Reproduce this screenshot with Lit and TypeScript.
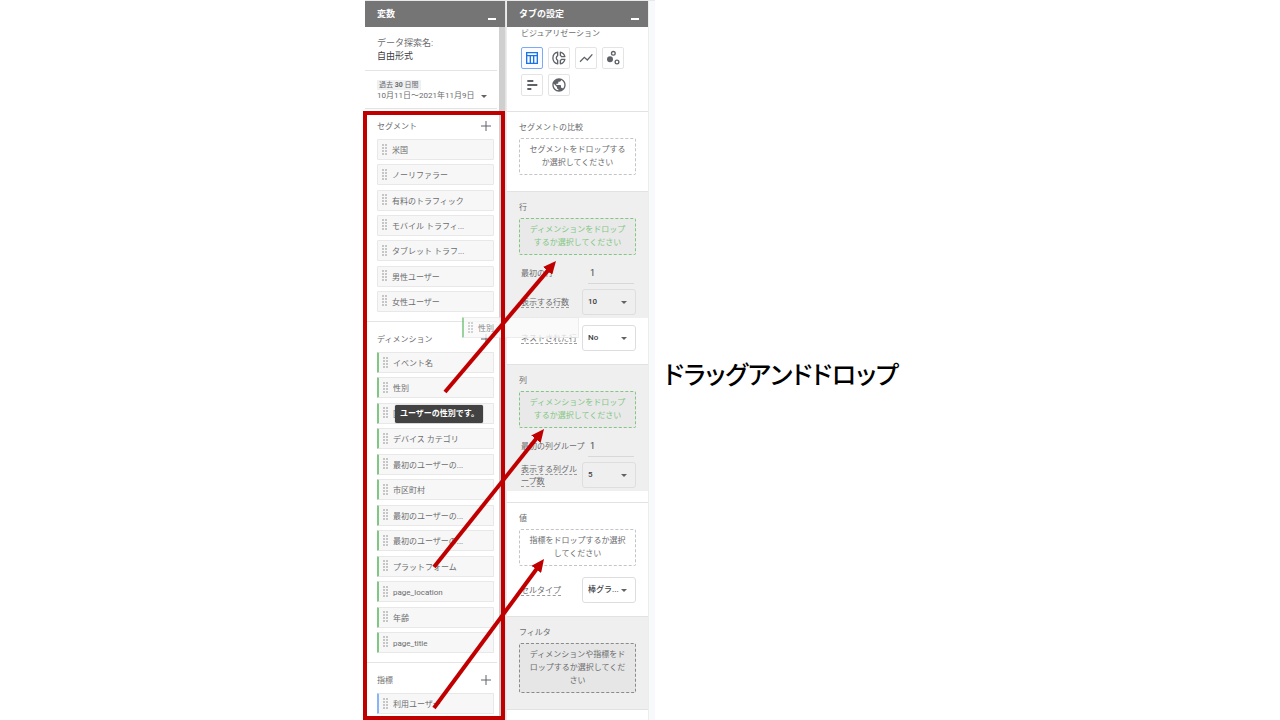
import { LitElement, html, svg, css, nothing } from "lit";
import { customElement } from "lit/decorators.js";

const segments = ["米国", "ノーリファラー", "有料のトラフィック", "モバイル トラフィ...", "タブレット トラフ...", "男性ユーザー", "女性ユーザー"];
const dimensions = ["イベント名", "性別", "国", "デバイス カテゴリ", "最初のユーザーの...", "市区町村", "最初のユーザーの...", "最初のユーザーの...", "プラットフォーム", "page_location", "年齢", "page_title"];
const metrics = ["利用ユーザー"];

const charts = [
  { name: "表", art: svg`<path d="M4 4h16v16H4zM4 8.500h16M9.500 8.500V20M14.500 8.500V20" fill="none" stroke="currentColor" stroke-width="2"/>` },
  { name: "ドーナツ グラフ", art: svg`<path d="M10 3.200a9 9 0 0 0 0 17.600v-5.300a4 4 0 0 1 0-7zM14 3.200a9 9 0 0 1 6.800 6.800h-5.100a4 4 0 0 0-1.700-1.700zM14 20.800a9 9 0 0 0 6.800-6.800h-5.100a4 4 0 0 1-1.700 1.700z" fill="none" stroke="currentColor" stroke-width="2" stroke-linejoin="round"/>` },
  { name: "折れ線グラフ", art: svg`<path d="M3 17.500l6.500-6.500 4.500 4 7.500-8.500" fill="none" stroke="currentColor" stroke-width="2"/>` },
  { name: "散布図", art: svg`<circle cx="7.500" cy="14" r="4.500" fill="currentColor"/><circle cx="12.500" cy="5" r="2.800" fill="none" stroke="currentColor" stroke-width="2"/><circle cx="18" cy="18" r="2.800" fill="none" stroke="currentColor" stroke-width="2"/>` },
  { name: "棒グラフ", art: svg`<path d="M5 6h9M5 12h15M5 18h6" stroke="currentColor" stroke-width="3"/>` },
  { name: "地図", art: svg`<path fill="currentColor" d="M12 2C6.480 2 2 6.480 2 12s4.480 10 10 10 10-4.480 10-10S17.520 2 12 2zm-1 17.930c-3.950-.490-7-3.850-7-7.930 0-.620.080-1.210.210-1.790L9 15v1c0 1.100.900 2 2 2v1.930zm6.900-2.540c-.260-.810-1-1.390-1.900-1.390h-1v-3c0-.550-.450-1-1-1H8v-2h2c.550 0 1-.450 1-1V7h2c1.100 0 2-.900 2-2v-.410c2.930 1.190 5 4.060 5 7.410 0 2.080-.800 3.970-2.100 5.390z"/>` },
];

const arrows = [
  [80, 392, 191, 261],
  [69, 567, 179, 429],
  [69, 708, 179, 559],
];

const grip = html`<svg class="grip" viewBox="0 0 6 12" aria-hidden="true">
  ${[0, 1, 2, 3].map((r) => svg`<path d="M0 ${r * 3 + 1}h2M3 ${r * 3 + 1}h2" stroke="#c6c6c6" stroke-width="2"/>`)}
</svg>`;

@customElement("app-root")
export class AppRoot extends LitElement {
  static styles = css`
    :host {
      display: block;
      background: #fff;
      color: #6b6c6e;
      font: 8px/12px Roboto, "Noto Sans CJK JP", sans-serif;
    }
    * { box-sizing: border-box; }
    button, input, select { font: inherit; color: inherit; margin: 0; }
    .page {
      display: grid;
      grid-template-columns: 290px 260px;
      justify-content: center;
      min-height: 100vh;
    }
    .board {
      position: relative;
      display: grid;
      grid-template-columns: 141px 143px 6px;
      border-top: 1px solid #e8e9ea;
    }
    .edge { background: #f8f9fa; }
    .variables { border-right: 1px solid #e4e4e4; }
    .settings { border-right: 1px solid #ececec; border-left: 1px solid #ececec; }
    .bar {
      display: flex;
      justify-content: space-between;
      align-items: center;
      height: 26px;
      padding: 0 9px 0 12px;
      background: #757575;
      color: #fff;
    }
    .bar h2 { margin: 0; font-size: 9px; font-weight: 700; }
    .fold {
      width: 8px;
      height: 12px;
      padding: 0;
      border: 0;
      border-bottom: 2px solid #fff;
      background: none;
    }
    .scroll { display: grid; grid-template-columns: 132px 8px; }
    .track { margin-left: 2px; background: #cfcfcf; }
    .name {
      margin: 0;
      padding: 10px 12px 7px;
      border-bottom: 1px solid #e4e4e4;
      font-size: 9px;
      line-height: 13px;
    }
    .name strong { display: block; font-weight: 400; color: #3c4043; }
    .dates {
      display: grid;
      justify-items: start;
      padding: 9px 0 6px 12px;
      border-bottom: 1px solid #e4e4e4;
    }
    .badge { padding: 0 2px; background: #eff0f2; font-size: 7px; line-height: 10px; }
    .range {
      display: flex;
      align-items: center;
      gap: 7px;
      padding: 0;
      border: 0;
      background: none;
      line-height: 12px;
      white-space: nowrap;
    }
    .caret { width: 6px; height: 3px; fill: #5f6368; }
    .picked { position: relative; }
    .picked::after {
      content: "";
      position: absolute;
      inset: 2px -8px 0 -2px;
      border: 4px solid #c00000;
      z-index: 2;
      pointer-events: none;
    }
    .group { padding: 11px 3px 9px 12px; border-bottom: 1px solid #e4e4e4; }
    .group:last-child { border: 0; padding-bottom: 6px; }
    .head {
      display: flex;
      justify-content: space-between;
      align-items: center;
      height: 14px;
      margin-bottom: 5px;
      padding-right: 3px;
    }
    .head h3, .title { margin: 0; font-size: 8px; font-weight: 400; line-height: 12px; }
    .plus { display: flex; padding: 0 0 2px; border: 0; background: none; }
    .plus svg { width: 10px; height: 10px; stroke: #5f6368; }
    .chips {
      display: flex;
      flex-direction: column;
      justify-content: space-between;
      margin: 0;
      padding: 0;
      list-style: none;
    }
    .segment { height: 173px; }
    .dimension { height: 301px; }
    .chip {
      display: flex;
      align-items: center;
      gap: 4px;
      height: 21px;
      padding-left: 4px;
      border: 1px solid #e8e8e8;
      border-radius: 1px;
      background: #f7f7f7;
      white-space: nowrap;
    }
    .label { padding-top: 3px; }
    .dimension .chip, .ghost { border-left: 2px solid #81c784; }
    .metric .chip { border-left: 2px solid #8ab4f8; }
    .grip { width: 6px; height: 12px; flex: none; }
    .ghost {
      position: absolute;
      left: 97px;
      top: 316px;
      width: 117px;
      background: #f9f9f9;
      opacity: 0.8;
    }
    .tip {
      position: absolute;
      left: 30px;
      top: 404px;
      width: 88px;
      padding: 3px 5px;
      border-radius: 2px;
      background: #424242;
      box-shadow: 0 0 1px #424242;
      color: #fff;
      font-weight: 700;
      white-space: nowrap;
    }
    .arrows {
      position: absolute;
      left: 0;
      top: -1px;
      width: 290px;
      height: 720px;
      z-index: 3;
      pointer-events: none;
    }
    .block { padding: 10px 12px 16px; border-top: 1px solid #e2e2e2; }
    .block.first { border: 0; padding: 1px 12px 15px 14px; }
    .shade { background: #efefef; }
    .block.tight { padding-bottom: 3px; }
    .block.roomy { padding-bottom: 13px; }
    .nested { padding: 7px 12px 13px; }
    .spacer { height: 11px; }
    .charts { display: flex; flex-wrap: wrap; gap: 5px; margin-top: 7px; }
    .chart {
      display: grid;
      place-items: center;
      width: 22px;
      height: 22px;
      padding: 0;
      border: 1px solid #e4e4e4;
      border-radius: 2px;
      background: #fff;
      color: #5f6368;
    }
    .chart svg { width: 16px; height: 16px; }
    .chart.on { border-color: #7baaf7; color: #1a73e8; background: #fafcff; }
    .drop {
      display: block;
      width: 100%;
      margin-top: 4px;
      padding: 4px 8px 5px;
      border: 1px dashed #c4c4c4;
      border-radius: 2px;
      background: none;
      line-height: 13px;
      text-align: center;
    }
    .drop.green { border-color: #81c784; background: #e9e9e9; color: #81c784; }
    .drop.dark { border-color: #8a8a8a; background: #e6e6e6; }
    .row {
      display: grid;
      grid-template-columns: 61px 54px;
      align-items: center;
      height: 26px;
      padding-left: 2px;
    }
    .row.one { margin: 5px 0 3px; }
    .row.far { margin-top: 11px; }
    .row label { justify-self: start; max-width: 58px; padding-top: 2px; }
    .row.one label { white-space: nowrap; }
    .dotted span { border-bottom: 1px dashed #9a9a9a; }
    .number {
      width: 46px;
      height: 21px;
      margin-left: 6px;
      padding: 0 2px;
      border: 0;
      border-bottom: 1px solid #d8d8d8;
      border-radius: 0;
      background: none;
      color: #3c4043;
      font-size: 9px;
      outline: 0;
    }
    .pick { position: relative; display: flex; align-items: center; }
    .pick select {
      appearance: none;
      width: 54px;
      height: 26px;
      padding: 0 5px;
      border: 1px solid #dedede;
      border-radius: 3px;
      background: none;
      color: #3c4043;
      font-weight: 500;
    }
    .pick .caret { position: absolute; right: 9px; pointer-events: none; }
    .caption {
      align-self: center;
      margin: 12px 0 0;
      padding-left: 9px;
      color: #000;
      font: 500 25px/32px "Noto Sans CJK JP", sans-serif;
      font-feature-settings: "palt";
      white-space: nowrap;
    }
  `;

  private caret() {
    return html`<svg class="caret" viewBox="0 0 6 3" aria-hidden="true"><path d="M0 0h6L3 3z" /></svg>`;
  }

  private bar(title: string) {
    return html`<header class="bar"><h2>${title}</h2><button class="fold" aria-label="最小化"></button></header>`;
  }

  private group(title: string, kind: string, items: string[]) {
    return html`<section class="group">
      <div class="head">
        <h3>${title}</h3>
        <button class="plus" aria-label="追加"><svg viewBox="0 0 10 10"><path d="M5 0v10M0 5h10" /></svg></button>
      </div>
      <ul class="chips ${kind}">
        ${items.map((t) => html`<li class="chip" draggable="true">${grip}<span class="label">${t}</span></li>`)}
      </ul>
    </section>`;
  }

  private number(id: string, label: string) {
    return html`<div class="row one"><label for=${id}>${label}</label><input class="number" id=${id} value="1" /></div>`;
  }

  private select(id: string, label: string, value: string, extra = "") {
    return html`<div class="row ${extra}">
      <label class="dotted" for=${id}><span>${label}</span></label>
      <div class="pick"><select id=${id}><option>${value}</option></select>${this.caret()}</div>
    </div>`;
  }

  render() {
    return html`<main class="page">
      <div class="board">
        <div class="variables">
          ${this.bar("変数")}
          <div class="scroll">
            <div>
              <p class="name">データ探索名:<strong>自由形式</strong></p>
              <div class="dates">
                <span class="badge">過去 <b>30</b> 日間</span>
                <button class="range">10月11日～2021年11月9日 ${this.caret()}</button>
              </div>
              <div class="picked">
                ${this.group("セグメント", "segment", segments)}
                ${this.group("ディメンション", "dimension", dimensions)}
                ${this.group("指標", "metric", metrics)}
              </div>
            </div>
            <div class="track"></div>
          </div>
        </div>
        <div class="settings">
          ${this.bar("タブの設定")}
          <section class="block first">
            <h3 class="title">ビジュアリゼーション</h3>
            <div class="charts">
              ${charts.map((c, i) => html`<button class="chart ${i === 0 ? "on" : ""}" aria-label=${c.name} aria-pressed=${i === 0 ? "true" : nothing}>
                <svg viewBox="0 0 24 24">${c.art}</svg>
              </button>`)}
            </div>
          </section>
          <section class="block">
            <h3 class="title">セグメントの比較</h3>
            <button class="drop">セグメントをドロップするか選択してください</button>
          </section>
          <section class="block shade tight">
            <h3 class="title">行</h3>
            <button class="drop green">ディメンションをドロップするか選択してください</button>
            ${this.number("first-row", "最初の行")}
            ${this.select("row-count", "表示する行数", "10")}
          </section>
          <div class="nested">${this.select("nested", "ネストされた行", "No")}</div>
          <section class="block shade tight">
            <h3 class="title">列</h3>
            <button class="drop green">ディメンションをドロップするか選択してください</button>
            ${this.number("first-col", "最初の列グループ")}
            ${this.select("col-count", "表示する列グループ数", "5")}
          </section>
          <div class="spacer"></div>
          <section class="block roomy">
            <h3 class="title">値</h3>
            <button class="drop">指標をドロップするか選択してください</button>
            ${this.select("cell-type", "セルタイプ", "棒グラ...", "far")}
          </section>
          <section class="block shade">
            <h3 class="title">フィルタ</h3>
            <button class="drop dark">ディメンションや指標をドロップするか選択してください</button>
          </section>
          <div class="block roomy"></div>
        </div>
        <div class="edge"></div>
        <div class="chip ghost">${grip}<span class="label">性別</span></div>
        <div class="tip" role="tooltip">ユーザーの性別です。</div>
        <svg class="arrows" viewBox="0 0 290 720" aria-hidden="true">
          <defs>
            <marker id="head" markerUnits="userSpaceOnUse" markerWidth="14" markerHeight="12" refX="13" refY="6" orient="auto">
              <path d="M0 0L13 6L0 12z" fill="#c00000" />
            </marker>
          </defs>
          ${arrows.map(([a, b, c, d]) => {
            const len = Math.hypot(c - a, d - b);
            const x = c - ((c - a) / len) * 10;
            const y = d - ((d - b) / len) * 10;
            return svg`<path d="M${a} ${b}L${x} ${y}" stroke="#c00000" stroke-width="4"/><path d="M${a} ${b}L${c} ${d}" stroke="none" fill="none" marker-end="url(#head)"/>`;
          })}
        </svg>
      </div>
      <p class="caption">ドラッグアンドドロップ</p>
    </main>`;
  }
}
